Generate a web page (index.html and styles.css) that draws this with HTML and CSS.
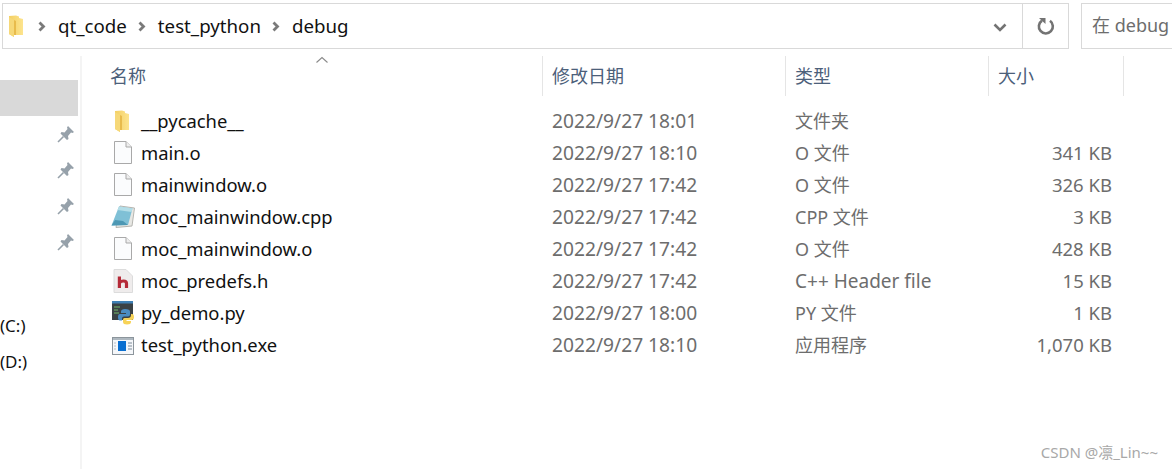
FILE: index.html
```html
<!DOCTYPE html>
<html lang="zh">
<head>
<meta charset="utf-8">
<title>debug</title>
<link rel="stylesheet" href="styles.css">
</head>
<body>
<svg class="defs" width="0" height="0" aria-hidden="true">
  <defs>
    <linearGradient id="fold" x1="0" y1="0" x2="1" y2="0"><stop offset="0" stop-color="#f3cf63"/><stop offset="1" stop-color="#fde48e"/></linearGradient>
    <symbol id="folder" viewBox="0 0 18 22">
      <path d="M2 1 L2 19 L7 22 L7 20 L16 20 L16 4 L12 3 L12 1.500 L9 0.500 Z" fill="url(#fold)"/>
      <path d="M2 2 L7 5 L7 22 L2 19 Z" fill="#f6d878"/>
      <path d="M7 5 L7 20 L9 20 L9 6 Z" fill="#e8bb4c"/>
    </symbol>
    <symbol id="page" viewBox="0 0 18 24">
      <path d="M0.500 0.500 H12 L17.500 6 V22.500 H0.500 Z" fill="#fbfcfd" stroke="#a9a9a9"/>
      <path d="M12 0.500 V6 H17.500" fill="#eeeeee" stroke="#a9a9a9"/>
    </symbol>
    <symbol id="pin" viewBox="0 0 18 18">
      <path d="M11 1 L17 7 L15.500 8 L14 7.500 L11 11 L11.500 14 L10 15 L3.500 8.500 L4.500 7 L7.500 7.500 L10.500 4 L10 2.500 Z" fill="#96a1aa"/>
      <path d="M6.500 11.500 L1 17" stroke="#96a1aa" stroke-width="1.600"/>
    </symbol>
  </defs>
</svg>
<div class="window">
  <header class="topbar">
    <div class="address">
      <div class="crumbs">
        <svg class="crumb-folder" width="18" height="22"><use href="#folder"/></svg>
        <svg class="chev" width="8" height="11" viewBox="0 0 8 11"><path d="M1.500 1.500 L5.500 5.500 L1.500 9.500" fill="none" stroke="#7a7a7a" stroke-width="2.800"/></svg>
        <span>qt_code</span>
        <svg class="chev" width="8" height="11" viewBox="0 0 8 11"><path d="M1.500 1.500 L5.500 5.500 L1.500 9.500" fill="none" stroke="#7a7a7a" stroke-width="2.800"/></svg>
        <span>test_python</span>
        <svg class="chev" width="8" height="11" viewBox="0 0 8 11"><path d="M1.500 1.500 L5.500 5.500 L1.500 9.500" fill="none" stroke="#7a7a7a" stroke-width="2.800"/></svg>
        <span>debug</span>
      </div>
      <div class="drop">
        <svg width="14" height="9" viewBox="0 0 14 9"><path d="M1.500 1.500 L7 7 L12.500 1.500" fill="none" stroke="#737373" stroke-width="2.600"/></svg>
      </div>
      <div class="refresh">
        <svg width="18" height="19" viewBox="0 0 18 19"><path d="M5 3.600 A7 7 0 1 0 13 3.800" fill="none" stroke="#737373" stroke-width="2.600"/><path d="M2 1 H8.500 V7 Z" fill="#737373"/></svg>
      </div>
    </div>
    <div class="search">在 debug</div>
  </header>
  <div class="body">
    <nav class="side">
      <div class="nav-row selected"></div>
      <div class="nav-row"><svg width="18" height="18"><use href="#pin"/></svg></div>
      <div class="nav-row"><svg width="18" height="18"><use href="#pin"/></svg></div>
      <div class="nav-row"><svg width="18" height="18"><use href="#pin"/></svg></div>
      <div class="nav-row"><svg width="18" height="18"><use href="#pin"/></svg></div>
      <div class="nav-gap"></div>
      <div class="nav-row drive">(C:)</div>
      <div class="nav-row drive">(D:)</div>
    </nav>
    <main class="list">
      <div class="cols">
        <div class="col first">名称<svg class="sort" width="14" height="8" viewBox="0 0 14 8"><path d="M1.500 6.500 L7 1.500 L12.500 6.500" fill="none" stroke="#8a8a8a" stroke-width="1.100"/></svg></div>
        <div class="col">修改日期</div>
        <div class="col">类型</div>
        <div class="col">大小</div>
      </div>
      <div class="rows">
        <div class="row"><span class="name"><svg class="ficon fold" width="18" height="22"><use href="#folder"/></svg>__pycache__</span><span class="date">2022/9/27 18:01</span><span>文件夹</span><span class="size"></span></div>
        <div class="row"><span class="name"><svg class="ficon doc" width="18" height="24"><use href="#page"/></svg>main.o</span><span class="date">2022/9/27 18:10</span><span>O 文件</span><span class="size">341 KB</span></div>
        <div class="row"><span class="name"><svg class="ficon doc" width="18" height="24"><use href="#page"/></svg>mainwindow.o</span><span class="date">2022/9/27 17:42</span><span>O 文件</span><span class="size">326 KB</span></div>
        <div class="row"><span class="name"><svg class="ficon" width="24" height="24" viewBox="0 0 24 24"><path d="M9 1 L23.500 3 L21 21 L5 22.500 Z" fill="#e8e8e4" stroke="#b5b5b0"/><path d="M8 1.500 L21.500 3.500 L17 20 L0.500 20.500 Z" fill="#7fc0d6"/><path d="M8 1.500 L21.500 3.500 L20.500 7 L6.500 5 Z" fill="#b4dee8"/><path d="M0.500 20.500 L17 20 L12 16 L4 15 Z" fill="#4d98b4"/></svg>moc_mainwindow.cpp</span><span class="date">2022/9/27 17:42</span><span>CPP 文件</span><span class="size">3 KB</span></div>
        <div class="row"><span class="name"><svg class="ficon doc" width="18" height="24"><use href="#page"/></svg>moc_mainwindow.o</span><span class="date">2022/9/27 17:42</span><span>O 文件</span><span class="size">428 KB</span></div>
        <div class="row"><span class="name"><svg class="ficon fold" width="20" height="24" viewBox="0 0 20 24"><path d="M1 0.500 H13 L19.500 7 V23.500 H1 Z" fill="#efecec" stroke="#dcdcdc"/><path d="M6.400 7.500 V19 M6.400 14 Q7.500 12 10.500 12 Q13.500 12 13.500 14.500 V19" fill="none" stroke="#b52a38" stroke-width="3.200"/></svg>moc_predefs.h</span><span class="date">2022/9/27 17:42</span><span class="latin">C++ Header file</span><span class="size">15 KB</span></div>
        <div class="row"><span class="name"><svg class="ficon" width="24" height="24" viewBox="0 0 24 24"><rect x="1" y="0" width="21" height="19" fill="#3a4145"/><rect x="1" y="0" width="21" height="2.500" fill="#3f80b5"/><path d="M3 6 H9 M3 9 H7 M3 12 H8" stroke="#73b96b" stroke-width="1.200"/><path d="M14 8 Q10 8 10 10.500 V12 H15 V13 H9 Q7 13 7 16 Q7 19.500 9 19.500 H11 V17.500 Q11 15.500 13 15.500 H17 Q19 15.500 19 13.500 V10.500 Q19 8 14 8 Z" fill="#4a8cc2"/><path d="M20 13 V14 Q20 17 17 17 H13.500 Q12 17 12 18.500 V21 Q12 23.500 16 23.500 Q20 23.500 20 21 V20 H15.500 V19 H20.500 Q23 19 23 16 Q23 13 21 13 Z" fill="#f7d358"/></svg>py_demo.py</span><span class="date">2022/9/27 18:00</span><span>PY 文件</span><span class="size">1 KB</span></div>
        <div class="row"><span class="name"><svg class="ficon" width="24" height="24" viewBox="0 0 24 24"><rect x="1.500" y="4.500" width="21" height="17" fill="#f5f7fa" stroke="#8c959c"/><rect x="2" y="5" width="20" height="2" fill="#aeb8c0"/><rect x="7" y="8" width="8" height="10" fill="#0a6fd0"/><path d="M17 10 H21 M17 13 H21 M17 16 H21" stroke="#7f8c98" stroke-width="1.100"/><path d="M3 10 H5 M3 13 H5 M3 16 H5" stroke="#b7c0c8" stroke-width="1.100"/></svg>test_python.exe</span><span class="date">2022/9/27 18:10</span><span>应用程序</span><span class="size">1,070 KB</span></div>
      </div>
    </main>
  </div>
  <div class="watermark">CSDN @凛_Lin~~</div>
</div>
</body>
</html>
```
FILE: styles.css
```css
* { box-sizing: border-box; }
html, body { margin: 0; padding: 0; }
body {
  width: 1172px;
  height: 469px;
  overflow: hidden;
  background: #fff;
  font-family: "Noto Sans", "Noto Sans CJK SC", sans-serif;
  color: #111;
}
.defs { position: absolute; }
.window { position: relative; width: 1172px; height: 469px; }
.topbar {
  display: flex;
  height: 56px;
  padding: 3px 0 7px 2px;
  gap: 12px;
}
.address {
  display: flex;
  width: 1067px;
  border: 1px solid #d9d9d9;
}
.crumbs {
  flex: 1;
  display: flex;
  align-items: center;
  padding-left: 4px;
  font-size: 18.7px;
  color: #111;
}
.crumb-folder { margin-right: 13px; }
.crumbs .chev { margin-right: 12px; }
.crumbs span { margin-right: 11px; padding-bottom: 2px; }
.drop {
  width: 36px;
  margin-right: 4px;
  display: flex;
  align-items: center;
  justify-content: center;
  padding-top: 3px;
}
.refresh {
  width: 46px;
  border-left: 1px solid #d9d9d9;
  display: flex;
  align-items: center;
  justify-content: center;
}
.search {
  flex: 1;
  border: 1px solid #d9d9d9;
  border-right: 0;
  padding-left: 10px;
  font-size: 18px;
  line-height: 43px;
  color: #6d6d6d;
  white-space: nowrap;
  overflow: hidden;
}
.body { display: flex; height: 413px; }
.side {
  width: 82px;
  padding-top: 24px;
  border-right: 2px solid #f4f4f4;
}
.nav-row {
  width: 78px;
  height: 36px;
  display: flex;
  align-items: center;
  justify-content: flex-end;
  padding-right: 3px;
}
.nav-row.selected { background: #d9d9d9; }
.nav-gap { height: 48px; }
.nav-row.drive {
  justify-content: flex-start;
  padding: 0 0 2px;
  font-size: 17px;
  color: #111;
}
.list { flex: 1; }
.cols {
  display: grid;
  grid-template-columns: 461px 243px 203px 135px;
  height: 40px;
  margin-bottom: 9px;
}
.col {
  position: relative;
  border-right: 1px solid #e5e5e5;
  padding-left: 9px;
  padding-top: 4px;
  font-size: 18px;
  line-height: 32px;
  color: #4c607a;
}
.col.first { padding-left: 28px; }
.sort { position: absolute; left: 233px; top: 0; }
.row {
  display: grid;
  grid-template-columns: 461px 243px 203px 123px;
  height: 32px;
  align-items: center;
  font-size: 18px;
  line-height: 24px;
  color: #6d6d6d;
}
.row > span { padding-left: 9px; white-space: nowrap; }
.row > .date { font-size: 19.2px; }
.row > .latin { font-size: 19px; }
.row > .name {
  display: flex;
  align-items: center;
  padding-left: 59px;
  font-size: 18.4px;
  color: #111;
  position: relative;
}
.ficon { position: absolute; left: 29px; }
.ficon.doc { left: 32px; }
.ficon.fold { left: 31px; }
.row > .size { text-align: right; padding: 0; font-size: 18.5px; }
.watermark {
  position: absolute;
  right: 14px;
  bottom: 7px;
  font-size: 15px;
  color: #a8a8a8;
}
```
